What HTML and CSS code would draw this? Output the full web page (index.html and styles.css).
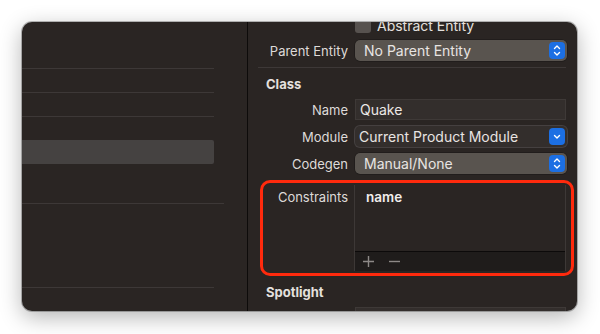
FILE: index.html
```html
<!DOCTYPE html>
<html>
<head>
<meta charset="utf-8">
<link rel="stylesheet" href="styles.css">
</head>
<body>
<div class="window">
  <div class="left">
    <div class="list">
      <div class="lrow"></div>
      <div class="lrow"></div>
      <div class="lrow"></div>
      <div class="lrow sel"></div>
      <div class="lline wide"></div>
      <div class="lline last"></div>
    </div>
  </div>
  <div class="divider"></div>
  <div class="right">
    <div class="row abstract">
      <span></span>
      <div class="check-wrap"><span class="checkbox"></span><span class="check-label">Abstract Entity</span></div>
    </div>
    <div class="row r-parent">
      <span class="label">Parent Entity</span>
      <div class="popup"><span>No Parent Entity</span>
        <span class="btn"><svg width="16" height="17" viewBox="0 0 16 17"><path d="M5.5 6.5 L8 4 L10.5 6.5 M5.5 10.5 L8 13 L10.5 10.5" fill="none" stroke="#fff" stroke-width="1.4" stroke-linecap="round" stroke-linejoin="round"/></svg></span>
      </div>
    </div>
    <div class="sep"></div>
    <div class="header">Class</div>
    <div class="row r-name">
      <span class="label">Name</span>
      <div class="field">Quake</div>
    </div>
    <div class="row r-gap">
      <span class="label">Module</span>
      <div class="popup dark"><span>Current Product Module</span>
        <span class="btn"><svg width="16" height="17" viewBox="0 0 16 17"><path d="M5.5 7.5 L8 10 L10.5 7.5" fill="none" stroke="#fff" stroke-width="1.4" stroke-linecap="round" stroke-linejoin="round"/></svg></span>
      </div>
    </div>
    <div class="row r-gap">
      <span class="label">Codegen</span>
      <div class="popup"><span>Manual/None</span>
        <span class="btn"><svg width="16" height="17" viewBox="0 0 16 17"><path d="M5.5 6.5 L8 4 L10.5 6.5 M5.5 10.5 L8 13 L10.5 10.5" fill="none" stroke="#fff" stroke-width="1.4" stroke-linecap="round" stroke-linejoin="round"/></svg></span>
      </div>
    </div>
    <div class="highlight">
      <span class="label top">Constraints</span>
      <div class="table">
        <div class="table-body"><span class="item">name</span></div>
        <div class="table-bar">
          <svg width="13" height="13" viewBox="0 0 13 13"><path d="M6.5 1 V12 M1 6.5 H12" stroke="#8d8987" stroke-width="1.4"/></svg>
          <svg width="13" height="13" viewBox="0 0 13 13"><path d="M1 6.5 H12" stroke="#8d8987" stroke-width="1.4"/></svg>
        </div>
      </div>
    </div>
    <div class="header spot">Spotlight</div>
    <div class="row r-last">
      <span></span>
      <div class="field"></div>
    </div>
  </div>
</div>
</body>
</html>
```

FILE: styles.css
```css
* { box-sizing: border-box; }
html, body { margin: 0; padding: 0; background: #ffffff; }
body {
  width: 600px;
  height: 334px;
  padding: 22px 0 0 22px;
  font-family: Inter, "Noto Sans", sans-serif;
  font-size: 13px;
  color: #dedad8;
  overflow: hidden;
}
.window {
  width: 555px;
  height: 289px;
  border-radius: 10px;
  background: #2a2523;
  display: flex;
  overflow: hidden;
  box-shadow: 0 0 0 1px rgba(0,0,0,0.25), 0 6px 22px rgba(0,0,0,0.3);
}
.left { width: 225px; flex: none; }
.list { margin-top: 46px; display: flex; flex-direction: column; }
.lrow { width: 192px; height: 24px; border-top: 1px solid #3d3837; flex: none; }
.lrow.sel { background: #454241; border-top: none; border-radius: 0 2px 2px 0; }
.lline { height: 1px; background: #3d3837; flex: none; }
.lline.wide { width: 202px; margin-top: 39px; }
.lline.last { width: 192px; margin-top: 83px; }
.divider { width: 1px; flex: none; background: #0d0b0a; }
.right {
  flex: 1;
  padding: 0 11px 0 10px;
  display: flex;
  flex-direction: column;
}
.right > * { flex: none; }
.row {
  display: grid;
  grid-template-columns: 90px 1fr;
  column-gap: 7px;
  align-items: center;
}
.label { text-align: right; color: #dedad8; white-space: nowrap; }
.abstract { margin-top: -7px; height: 16px; }
.check-wrap { display: flex; align-items: center; gap: 6px; }
.checkbox { width: 16px; height: 16px; border-radius: 3px; background: #57524f; flex: none; }
.check-label { color: #e4e0de; font-size: 14px; line-height: 16px; margin-top: 3px; }
.r-parent { margin-top: 9px; }
.popup {
  height: 21px;
  border-radius: 5px;
  background: #59544f;
  box-shadow: 0 0 0 0.5px rgba(0,0,0,0.4);
  display: flex;
  align-items: center;
  justify-content: space-between;
  padding: 0 2px 0 9px;
  color: #e8e4e2;
  font-size: 14px;
  margin-right: -1px;
}
.popup.dark { background: #332e2c; box-shadow: 0 0 0 1px #454040; padding-left: 4px; }
.btn {
  width: 16px;
  height: 17px;
  border-radius: 4px;
  background: #1c6fe3;
  display: flex;
}
.sep { height: 1px; background: #3d3837; margin-top: 6px; }
.header { font-weight: 700; color: #e4e0de; height: 16px; line-height: 16px; margin-top: 8px; padding-left: 8px; }
.field {
  height: 21px;
  background: #332e2c;
  border: 1px solid #3e3937;
  padding-left: 4px;
  line-height: 19px;
  font-size: 14px;
  color: #ece8e6;
}
.r-name { margin-top: 7px; }
.r-gap { margin-top: 6px; }
.highlight {
  margin: 6px -8px 0 2px;
  height: 96px;
  border: 3px solid #ff2a0d;
  border-radius: 10px;
  padding: 2px 5px 2px 0;
  display: grid;
  grid-template-columns: 85px 1fr;
  column-gap: 6px;
}
.label.top { padding-top: 4px; line-height: 16px; }
.table {
  display: flex;
  flex-direction: column;
  border-left: 1px solid #3d3836;
  border-right: 1px solid #3d3836;
}
.table-body { flex: 1; padding: 4px 0 0 11px; line-height: 16px; }
.item { font-weight: 600; font-size: 13.5px; color: #f2eeec; }
.table-bar {
  height: 20px;
  flex: none;
  background: #1f1c1b;
  border-top: 1px solid #0c0a0a;
  display: flex;
  align-items: center;
  gap: 13px;
  padding-left: 7px;
}
.spot { margin-top: 8px; }
.r-last { margin-top: 7px; }
```
